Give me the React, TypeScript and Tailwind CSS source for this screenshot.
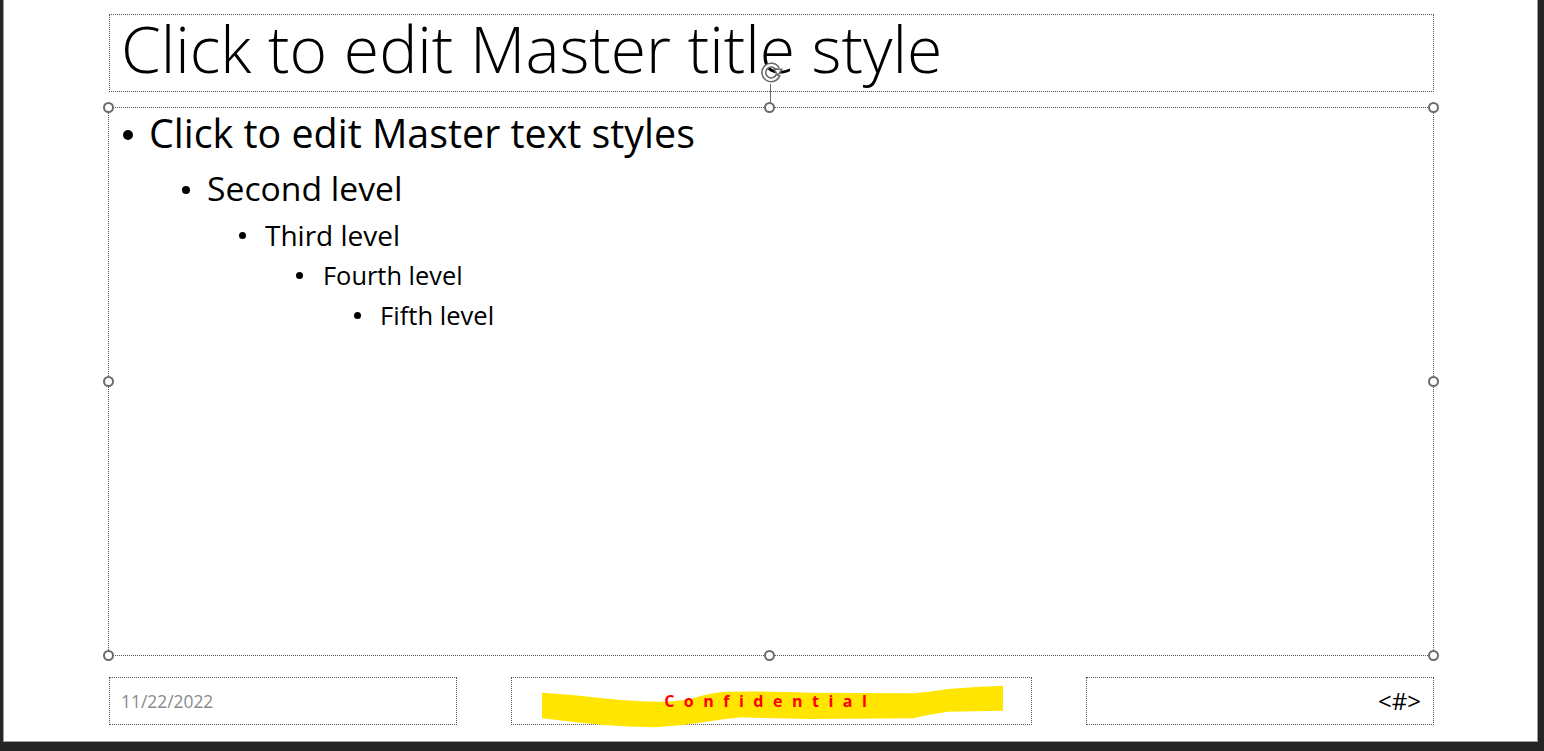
import React from "react";

function Handle({ className }: { className: string }) {
  return (
    <span
      className={
        "absolute w-[11px] h-[11px] rounded-full bg-white border-2 border-[#6b6b6b] z-10 " +
        className
      }
    />
  );
}

function RotateIcon() {
  return (
    <svg width="28" height="28" viewBox="0 0 24 24" className="block">
      <path
        d="M17.6 9.2 A6.3 6.3 0 1 0 18.2 14.2"
        fill="none"
        stroke="#6b6b6b"
        strokeWidth="4.6"
        strokeLinecap="butt"
      />
      <path
        d="M17.6 9.2 A6.3 6.3 0 1 0 18.2 14.2"
        fill="none"
        stroke="#ffffff"
        strokeWidth="1.8"
        strokeLinecap="butt"
      />
      <path
        d="M14.4 9.4 L21.4 9.6 L17.8 15 Z"
        fill="#ffffff"
        stroke="#6b6b6b"
        strokeWidth="1.3"
        strokeLinejoin="round"
      />
    </svg>
  );
}

function Highlight() {
  return (
    <svg
      className="absolute left-[-1px] top-[-1px] overflow-visible"
      width="521"
      height="60"
      viewBox="0 0 521 60"
    >
      <path
        d="M31 15.7 Q62 17.5 92 21.3 Q125 25 154 24.7 Q170 24 182 21.3 Q198 16 213 14.7 Q255 13.8 299 15.7 L402 16.3 Q420 15 437 12 Q465 9.5 492 8.7 L492 33.7 Q465 34 437 34.7 Q420 37 402 41.3 L299 42 Q265 41.5 230 40.3 Q212 42 196 44.7 Q170 49 144 50.3 Q118 50 92 48 Q60 45 31 41.3 Z"
        fill="#FFE500"
      />
    </svg>
  );
}

export default function App() {
  return (
    <div className="w-[1544px] h-[751px] bg-[#252525] pl-[3px] overflow-hidden font-['Open_Sans',sans-serif]">
      <div className="w-[1535px] h-[742px] bg-white border-x border-b border-[#9c9c9c] pl-[105px] pr-[103px] pt-[14px] flex flex-col">
        {/* Title placeholder */}
        <div className="h-[78px] shrink-0 border border-dotted border-[#555] pl-[11px] text-[64.2px] font-light leading-[66px] text-black whitespace-nowrap">
          Click to edit Master title style
        </div>

        {/* Body placeholder */}
        <div className="relative mt-[15px] -ml-px h-[549px] shrink-0 border border-dotted border-[#555] text-black">
          {/* rotation handle */}
          <div className="absolute left-[661px] top-[-24px] w-px h-[20px] bg-[#6b6b6b]" />
          <div className="absolute left-[648px] top-[-50px] z-10">
            <RotateIcon />
          </div>

          <Handle className="-left-[6px] -top-[6px]" />
          <Handle className="left-[655px] -top-[6px]" />
          <Handle className="-right-[6px] -top-[6px]" />
          <Handle className="-left-[6px] top-[268px]" />
          <Handle className="-right-[6px] top-[268px]" />
          <Handle className="-left-[6px] -bottom-[6px]" />
          <Handle className="left-[655px] -bottom-[6px]" />
          <Handle className="-right-[6px] -bottom-[6px]" />

          <div className="flex flex-col whitespace-nowrap">
            <div className="flex items-center mt-[6px] pl-[14px] text-[39.4px] leading-none">
              <span className="w-[10px] h-[10px] rounded-full bg-black mr-[16px] mt-[2px] shrink-0" />
              <span>Click to edit Master text styles</span>
            </div>
            <div className="flex items-center mt-[19px] pl-[73px] text-[33.7px] leading-none">
              <span className="w-[8px] h-[8px] rounded-full bg-black mr-[17px] mt-[2px] shrink-0" />
              <span>Second level</span>
            </div>
            <div className="flex items-center mt-[15px] pl-[130px] text-[28px] leading-none">
              <span className="w-[7px] h-[7px] rounded-full bg-black mr-[19px] shrink-0" />
              <span>Third level</span>
            </div>
            <div className="flex items-center mt-[14px] pl-[187px] text-[25.4px] leading-none">
              <span className="w-[7px] h-[7px] rounded-full bg-black mr-[20px] shrink-0" />
              <span>Fourth level</span>
            </div>
            <div className="flex items-center mt-[14px] pl-[245px] text-[25.6px] leading-none">
              <span className="w-[7px] h-[7px] rounded-full bg-black mr-[19px] shrink-0" />
              <span>Fifth level</span>
            </div>
          </div>
        </div>

        {/* Footer placeholders */}
        <div className="mt-[21px] flex gap-[54px] shrink-0">
          <div className="w-[348px] h-[48px] border border-dotted border-[#555] flex items-center pl-[11px] text-[17.4px] text-[#8a8a8a]">
            11/22/2022
          </div>
          <div className="relative w-[521px] h-[48px] border border-dotted border-[#555] flex items-center justify-center">
            <Highlight />
            <span className="relative z-10 text-[16px] font-bold text-[#ff0000] tracking-[9.5px] pl-[9.5px] -translate-x-[6px]">
              Confidential
            </span>
          </div>
          <div className="w-[348px] h-[48px] border border-dotted border-[#555] flex items-center justify-end pr-[12px] text-[24px] text-black">
            &lt;#&gt;
          </div>
        </div>
      </div>
    </div>
  );
}
